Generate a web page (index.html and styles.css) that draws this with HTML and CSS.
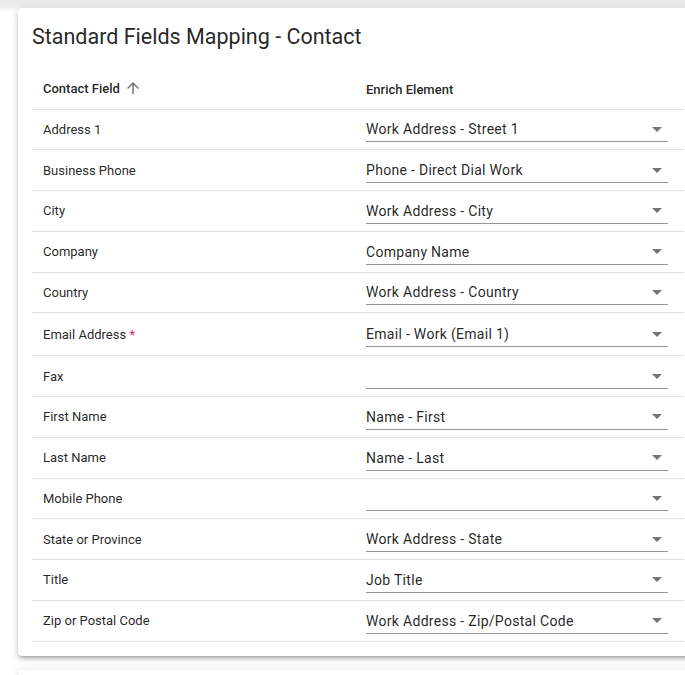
FILE: index.html
```html
<!DOCTYPE html>
<html lang="en">
<head>
  <meta charset="UTF-8" />
  <meta name="viewport" content="width=device-width, initial-scale=1.0">
  <title>Standard Fields Mapping - Contact</title>
  <link rel="stylesheet" href="styles.css">
</head>
<body>
  <div class="page">
    <div class="card">
      <h1>Standard Fields Mapping - Contact</h1>
      <div class="mapping">
        <div class="row head">
          <div class="cell">Contact Field
            <svg class="sort" viewBox="0 0 24 24" width="18" height="18"><path d="M4 12l1.41 1.41L11 7.83V20h2V7.83l5.58 5.59L20 12l-8-8-8 8z"/></svg>
          </div>
          <div class="cell">Enrich Element</div>
        </div>
        <div class="row">
          <div class="cell">Address 1</div>
          <div class="cell"><div class="select"><span class="value">Work Address - Street 1</span><span class="caret"></span></div></div>
        </div>
        <div class="row">
          <div class="cell">Business Phone</div>
          <div class="cell"><div class="select"><span class="value">Phone - Direct Dial Work</span><span class="caret"></span></div></div>
        </div>
        <div class="row">
          <div class="cell">City</div>
          <div class="cell"><div class="select"><span class="value">Work Address - City</span><span class="caret"></span></div></div>
        </div>
        <div class="row">
          <div class="cell">Company</div>
          <div class="cell"><div class="select"><span class="value">Company Name</span><span class="caret"></span></div></div>
        </div>
        <div class="row">
          <div class="cell">Country</div>
          <div class="cell"><div class="select"><span class="value">Work Address - Country</span><span class="caret"></span></div></div>
        </div>
        <div class="row tall">
          <div class="cell">Email Address <span class="required">*</span></div>
          <div class="cell"><div class="select"><span class="value">Email - Work (Email 1)</span><span class="caret"></span></div></div>
        </div>
        <div class="row">
          <div class="cell">Fax</div>
          <div class="cell"><div class="select"><span class="value"></span><span class="caret"></span></div></div>
        </div>
        <div class="row">
          <div class="cell">First Name</div>
          <div class="cell"><div class="select"><span class="value">Name - First</span><span class="caret"></span></div></div>
        </div>
        <div class="row">
          <div class="cell">Last Name</div>
          <div class="cell"><div class="select"><span class="value">Name - Last</span><span class="caret"></span></div></div>
        </div>
        <div class="row">
          <div class="cell">Mobile Phone</div>
          <div class="cell"><div class="select"><span class="value"></span><span class="caret"></span></div></div>
        </div>
        <div class="row">
          <div class="cell">State or Province</div>
          <div class="cell"><div class="select"><span class="value">Work Address - State</span><span class="caret"></span></div></div>
        </div>
        <div class="row">
          <div class="cell">Title</div>
          <div class="cell"><div class="select"><span class="value">Job Title</span><span class="caret"></span></div></div>
        </div>
        <div class="row">
          <div class="cell">Zip or Postal Code</div>
          <div class="cell"><div class="select"><span class="value">Work Address - Zip/Postal Code</span><span class="caret"></span></div></div>
        </div>
      </div>
    </div>
    <div class="card next"></div>
  </div>
</body>
</html>
```

FILE: styles.css
```css
html, body {
  margin: 0; padding: 0; height: 100%;
  overflow: hidden;
  font-family: Roboto, 'Liberation Sans', sans-serif;
  color: rgba(0,0,0,0.87);
}
body {
  background: linear-gradient(#e9e9e9 0px, #eeeeee 6px, #ffffff 12px) no-repeat;
}
.page {
  padding: 8px 0 0 18px;
  display: flex; flex-direction: column;
  gap: 14px;
}
.card {
  width: 680px;
  box-sizing: border-box;
  background: white;
  border-radius: 4px;
  padding: 15px 14px 14px 14px;
  box-shadow: 0 3px 3px -2px rgba(0,0,0,0.2), 0 3px 4px 0 rgba(0,0,0,0.14), 0 1px 10px 0 rgba(0,0,0,0.14);
}
.card.next {
  height: 5px;
  padding: 0;
}
h1 {
  margin: 0;
  font-size: 21.5px; line-height: 26px;
  font-weight: 400;
  padding-top: 0.5px;
}
.row {
  display: grid;
  grid-template-columns: 323px 1fr;
  align-items: center;
  min-height: 39.75px;
  border-bottom: 1px solid #e0e0e0;
  font-size: 13px;
}
.row.tall {
  min-height: 42px;
}
.row.head {
  align-items: end;
  padding: 30px 0 12px;
  min-height: 0;
  font-weight: 500;
  line-height: 15px;
}
.cell {
  padding-left: 11px;
}
.head .cell {
  display: flex; align-items: center;
}
.sort {
  fill: #757575;
  margin-left: 4px;
  margin-top: -1px;
}
.required {
  color: #e2187f;
}
.select {
  width: 302px;
  display: flex; align-items: center;
  font-size: 14px; line-height: 20px;
  letter-spacing: 0.3px;
  padding-bottom: 2px;
  border-bottom: 1px solid #949494;
  margin-top: 3px;
}
.value {
  flex: 1;
  height: 20px;
}
.caret {
  width: 0; height: 0;
  border-left: 5px solid transparent;
  border-right: 5px solid transparent;
  border-top: 5px solid #757575;
  margin: 0 6px 0 0;
}
```
